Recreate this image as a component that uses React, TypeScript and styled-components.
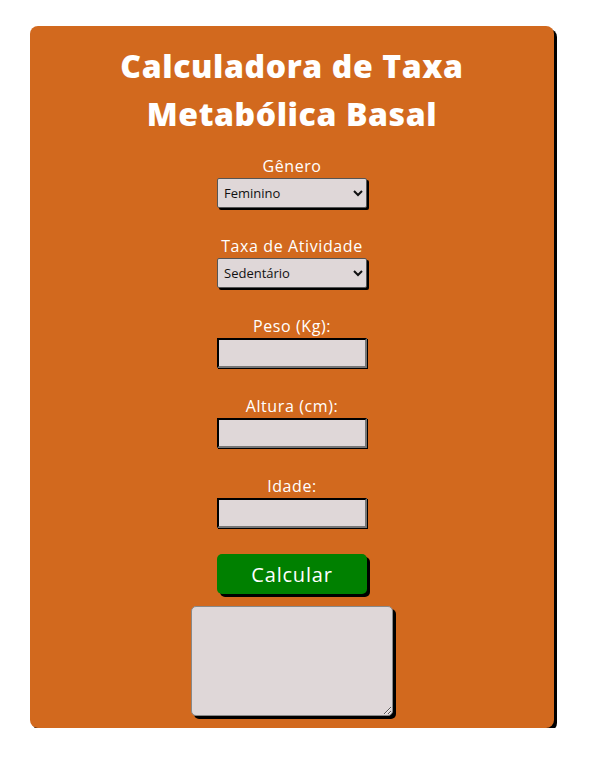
import styled, { createGlobalStyle } from "styled-components"

const Global = createGlobalStyle`
  body {
    margin: 0;
    background: #ffffff;
    font-family: "Open Sans", "Noto Sans", sans-serif;
  }
`

const Card = styled.div`
  box-sizing: border-box;
  width: 524px;
  margin: 26px 0 0 30px;
  padding: 16px 0 12px 0;
  background-color: #d2691e;
  border-radius: 8px;
  box-shadow: 3px 3px 0 #000;
  display: flex;
  flex-direction: column;
  align-items: center;
`

const Title = styled.h1`
  margin: 0 0 16px 0;
  color: #ffffff;
  font-family: "Open Sans", sans-serif;
  font-weight: 800;
  font-size: 32px;
  line-height: 48px;
  text-align: center;
  letter-spacing: 0.6px;
`

const Field = styled.div`
  display: flex;
  flex-direction: column;
  align-items: center;
  margin-bottom: 26px;
`

const Label = styled.label`
  color: #ffffff;
  font-size: 16px;
  line-height: 24px;
  letter-spacing: 0.6px;
`

const Select = styled.select`
  box-sizing: border-box;
  width: 150px;
  height: 30px;
  padding: 0 2px;
  background-color: #dfd7d8;
  color: #111;
  font-family: "Open Sans", sans-serif;
  font-size: 13px;
  border: 1px solid #555;
  border-radius: 2px;
  box-shadow: 2px 2px 0 #000;
`

const Input = styled.input`
  box-sizing: border-box;
  width: 150px;
  height: 30px;
  background-color: #dfd7d8;
  border: 2px inset #767676;
  border-top-color: #222;
  border-left-color: #222;
  box-shadow: 1px 1px 0 #000;
`

const Button = styled.button`
  box-sizing: border-box;
  width: 150px;
  height: 40px;
  background-color: #008000;
  color: #ffffff;
  border: none;
  border-radius: 5px;
  box-shadow: 3px 3px 0 #000;
  font-family: "Open Sans", sans-serif;
  font-size: 20px;
  letter-spacing: 0.8px;
  cursor: pointer;
`

const Output = styled.textarea`
  box-sizing: border-box;
  width: 202px;
  height: 110px;
  margin-top: 12px;
  background-color: #dfd7d8;
  border: 1px solid #888;
  border-radius: 5px;
  box-shadow: 3px 3px 0 #000;
`

export default function App() {
  return (
    <>
      <Global />
      <Card>
        <Title>
          Calculadora de Taxa
          <br />
          Metabólica Basal
        </Title>
        <Field>
          <Label htmlFor="genero">Gênero</Label>
          <Select id="genero">
            <option>Feminino</option>
            <option>Masculino</option>
          </Select>
        </Field>
        <Field>
          <Label htmlFor="atividade">Taxa de Atividade</Label>
          <Select id="atividade">
            <option>Sedentário</option>
            <option>Levemente ativo</option>
            <option>Moderadamente ativo</option>
            <option>Muito ativo</option>
          </Select>
        </Field>
        <Field>
          <Label htmlFor="peso">Peso (Kg):</Label>
          <Input id="peso" type="text" />
        </Field>
        <Field>
          <Label htmlFor="altura">Altura (cm):</Label>
          <Input id="altura" type="text" />
        </Field>
        <Field>
          <Label htmlFor="idade">Idade:</Label>
          <Input id="idade" type="text" />
        </Field>
        <Button>Calcular</Button>
        <Output />
      </Card>
    </>
  )
}
